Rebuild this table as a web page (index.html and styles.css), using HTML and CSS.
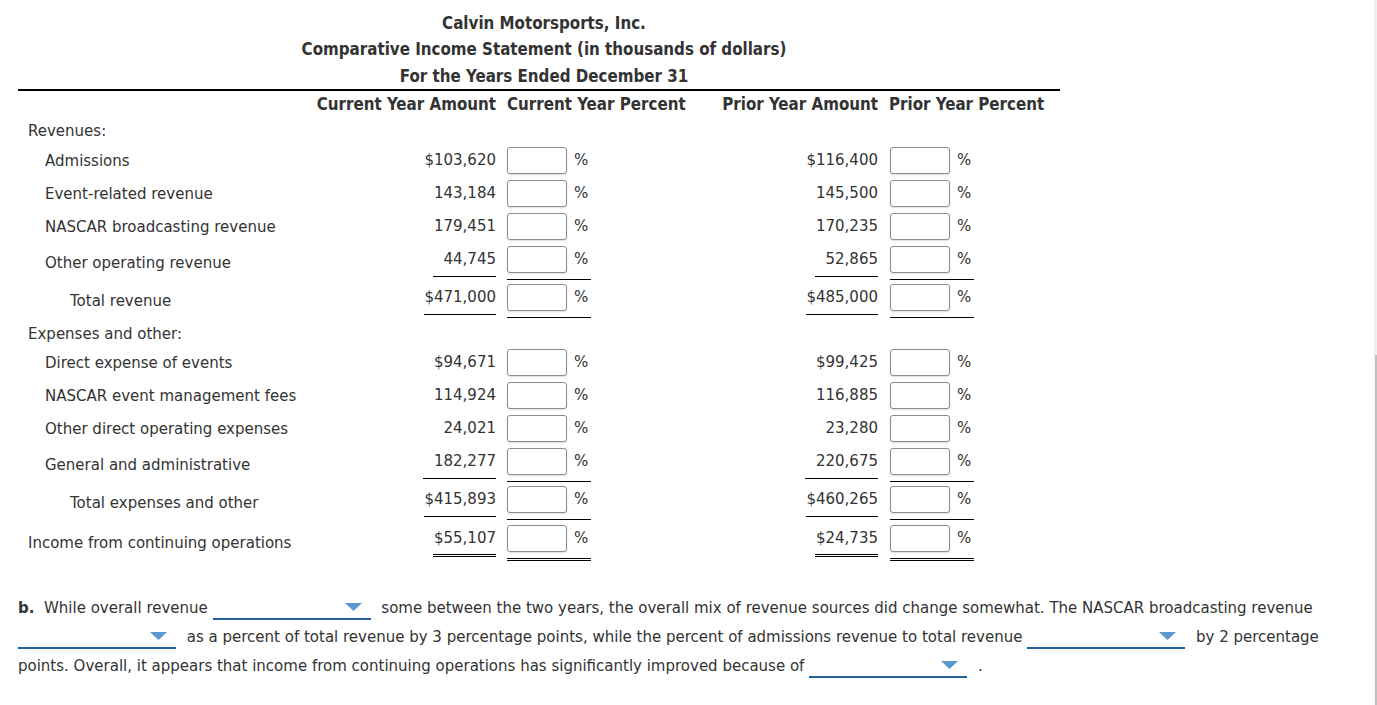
FILE: index.html
```html
<!DOCTYPE html>
<html lang="en">
<head>
<meta charset="utf-8">
<title>Calvin Motorsports, Inc. - Comparative Income Statement</title>
<link rel="stylesheet" href="styles.css">
</head>
<body>
<div class="page">
  <div class="statement">
    <div class="title">
      <div>Calvin Motorsports, Inc.</div>
      <div>Comparative Income Statement (in thousands of dollars)</div>
      <div>For the Years Ended December 31</div>
    </div>

    <div class="row head">
      <div></div>
      <div class="amt">Current Year Amount</div>
      <div class="pct">Current Year Percent</div>
      <div class="amt">Prior Year Amount</div>
      <div class="pct prior">Prior Year Percent</div>
    </div>

    <div class="row section"><div class="label">Revenues:</div></div>

    <div class="row item">
      <div class="label sub">Admissions</div>
      <div class="amt"><span class="num">$103,620</span></div>
      <div class="pct"><span class="pbox"><input class="field" type="text"><span class="sign">%</span></span></div>
      <div class="amt"><span class="num">$116,400</span></div>
      <div class="pct prior"><span class="pbox"><input class="field" type="text"><span class="sign">%</span></span></div>
    </div>
    <div class="row item">
      <div class="label sub">Event-related revenue</div>
      <div class="amt"><span class="num">143,184</span></div>
      <div class="pct"><span class="pbox"><input class="field" type="text"><span class="sign">%</span></span></div>
      <div class="amt"><span class="num">145,500</span></div>
      <div class="pct prior"><span class="pbox"><input class="field" type="text"><span class="sign">%</span></span></div>
    </div>
    <div class="row item">
      <div class="label sub">NASCAR broadcasting revenue</div>
      <div class="amt"><span class="num">179,451</span></div>
      <div class="pct"><span class="pbox"><input class="field" type="text"><span class="sign">%</span></span></div>
      <div class="amt"><span class="num">170,235</span></div>
      <div class="pct prior"><span class="pbox"><input class="field" type="text"><span class="sign">%</span></span></div>
    </div>
    <div class="row item last">
      <div class="label sub">Other operating revenue</div>
      <div class="amt"><span class="num ul">44,745</span></div>
      <div class="pct"><span class="pbox ul"><input class="field" type="text"><span class="sign">%</span></span></div>
      <div class="amt"><span class="num ul">52,865</span></div>
      <div class="pct prior"><span class="pbox ul"><input class="field" type="text"><span class="sign">%</span></span></div>
    </div>
    <div class="row item total">
      <div class="label tot">Total revenue</div>
      <div class="amt"><span class="num ul">$471,000</span></div>
      <div class="pct"><span class="pbox ul"><input class="field" type="text"><span class="sign">%</span></span></div>
      <div class="amt"><span class="num ul">$485,000</span></div>
      <div class="pct prior"><span class="pbox ul"><input class="field" type="text"><span class="sign">%</span></span></div>
    </div>

    <div class="row section exp"><div class="label">Expenses and other:</div></div>

    <div class="row item">
      <div class="label sub">Direct expense of events</div>
      <div class="amt"><span class="num">$94,671</span></div>
      <div class="pct"><span class="pbox"><input class="field" type="text"><span class="sign">%</span></span></div>
      <div class="amt"><span class="num">$99,425</span></div>
      <div class="pct prior"><span class="pbox"><input class="field" type="text"><span class="sign">%</span></span></div>
    </div>
    <div class="row item">
      <div class="label sub">NASCAR event management fees</div>
      <div class="amt"><span class="num">114,924</span></div>
      <div class="pct"><span class="pbox"><input class="field" type="text"><span class="sign">%</span></span></div>
      <div class="amt"><span class="num">116,885</span></div>
      <div class="pct prior"><span class="pbox"><input class="field" type="text"><span class="sign">%</span></span></div>
    </div>
    <div class="row item">
      <div class="label sub">Other direct operating expenses</div>
      <div class="amt"><span class="num">24,021</span></div>
      <div class="pct"><span class="pbox"><input class="field" type="text"><span class="sign">%</span></span></div>
      <div class="amt"><span class="num">23,280</span></div>
      <div class="pct prior"><span class="pbox"><input class="field" type="text"><span class="sign">%</span></span></div>
    </div>
    <div class="row item last">
      <div class="label sub">General and administrative</div>
      <div class="amt"><span class="num ul wide">182,277</span></div>
      <div class="pct"><span class="pbox ul"><input class="field" type="text"><span class="sign">%</span></span></div>
      <div class="amt"><span class="num ul wide">220,675</span></div>
      <div class="pct prior"><span class="pbox ul"><input class="field" type="text"><span class="sign">%</span></span></div>
    </div>
    <div class="row item total">
      <div class="label tot">Total expenses and other</div>
      <div class="amt"><span class="num ul">$415,893</span></div>
      <div class="pct"><span class="pbox ul"><input class="field" type="text"><span class="sign">%</span></span></div>
      <div class="amt"><span class="num ul">$460,265</span></div>
      <div class="pct prior"><span class="pbox ul"><input class="field" type="text"><span class="sign">%</span></span></div>
    </div>

    <div class="row item income">
      <div class="label">Income from continuing operations</div>
      <div class="amt"><span class="num dbl">$55,107</span></div>
      <div class="pct"><span class="pbox dbl"><input class="field" type="text"><span class="sign">%</span></span></div>
      <div class="amt"><span class="num dbl">$24,735</span></div>
      <div class="pct prior"><span class="pbox dbl"><input class="field" type="text"><span class="sign">%</span></span></div>
    </div>
  </div>

  <p class="answer"><b>b.</b>&nbsp; While overall revenue <span class="dropdown"><svg class="caret" width="17" height="8" viewBox="0 0 17 8"><path d="M0 0H17L8.5 8Z"/></svg></span> some between the two years, the overall mix of revenue sources did change somewhat. The NASCAR broadcasting revenue <span class="dropdown"><svg class="caret" width="17" height="8" viewBox="0 0 17 8"><path d="M0 0H17L8.5 8Z"/></svg></span> as a percent of total revenue by 3 percentage points, while the percent of admissions revenue to total revenue <span class="dropdown"><svg class="caret" width="17" height="8" viewBox="0 0 17 8"><path d="M0 0H17L8.5 8Z"/></svg></span> by 2 percentage points. Overall, it appears that income from continuing operations has significantly improved because of <span class="dropdown"><svg class="caret" width="17" height="8" viewBox="0 0 17 8"><path d="M0 0H17L8.5 8Z"/></svg></span> .</p>
</div>
<div class="scrollbar"><div class="thumb"></div></div>
</body>
</html>
```

FILE: styles.css
```css
html, body {
  margin: 0;
  padding: 0;
  background: #fff;
}

body {
  color: #333;
  font-family: "DejaVu Sans", Verdana, sans-serif;
  font-size: 15px;
}

.page {
  padding: 9.5px 0 0 18px;
}

.statement {
  width: 1042px;
}

.title {
  padding-left: 10px;
  text-align: center;
  font-family: "DejaVu Sans Condensed", "DejaVu Sans", sans-serif;
  font-weight: bold;
  font-size: 16.8px;
  line-height: 26.5px;
}

.row {
  display: grid;
  grid-template-columns: 282px 196px 204px 178px 182px;
}

.head {
  border-top: 2px solid #000;
  height: 27px;
  line-height: 27px;
  font-family: "DejaVu Sans Condensed", "DejaVu Sans", sans-serif;
  font-weight: bold;
  font-size: 16.8px;
  white-space: nowrap;
}

.head .amt {
  text-align: right;
}

.head .pct {
  padding-left: 11px;
}

.section {
  height: 26px;
  line-height: 26px;
}

.section.exp {
  height: 27px;
  line-height: 30px;
}

.label {
  padding-left: 10px;
  align-self: center;
  white-space: nowrap;
}

.section .label {
  align-self: start;
}

.label.sub {
  padding-left: 27px;
}

.label.tot {
  padding-left: 52px;
}

.item .amt,
.item .pct {
  padding-top: 3px;
  padding-bottom: 3px;
}

.item.total .amt,
.item.total .pct {
  padding-top: 1px;
  padding-bottom: 1px;
}

.item.income .amt,
.item.income .pct {
  padding-top: 4px;
  padding-bottom: 4px;
}

.item .amt {
  text-align: right;
}

.item .pct {
  padding-left: 11px;
}

.item .pct.prior {
  padding-left: 12px;
}

.num {
  display: inline-block;
  min-width: 63px;
  height: 27px;
  line-height: 27px;
  text-align: right;
  vertical-align: top;
}

.num.wide {
  min-width: 73px;
}

.pbox {
  display: inline-flex;
  align-items: center;
  height: 27px;
  padding-right: 3px;
  vertical-align: top;
}

.num.ul {
  padding-bottom: 3px;
  border-bottom: 1px solid #000;
}

.pbox.ul {
  padding-bottom: 6px;
  border-bottom: 1px solid #000;
}

.num.dbl {
  padding-bottom: 2px;
  border-bottom: 3px double #000;
}

.pbox.dbl {
  padding-bottom: 6px;
  border-bottom: 3px double #000;
}

.field {
  box-sizing: border-box;
  width: 60px;
  height: 27px;
  margin: 0;
  padding: 0 4px;
  border: 1px solid #8d8d8d;
  border-radius: 3px;
  background: #fff;
  box-shadow: 0 1px 2px rgba(0, 0, 0, 0.14);
  font: inherit;
}

.sign {
  margin-left: 7px;
  line-height: 27px;
}

.answer {
  margin: 28.5px 0 0;
  width: 1340px;
  font-family: "DejaVu Sans", Verdana, sans-serif;
  font-size: 15px;
  line-height: 29px;
  color: #333;
}

.dropdown {
  display: inline-flex;
  align-items: center;
  justify-content: flex-end;
  box-sizing: content-box;
  width: 149px;
  height: 21px;
  padding-right: 9px;
  margin-right: 6px;
  border-bottom: 2px solid #23619b;
  vertical-align: middle;
}

.caret {
  display: block;
  fill: #5b97d1;
}

.scrollbar {
  position: fixed;
  top: 0;
  right: 0;
  bottom: 0;
  width: 3px;
  background: #f1f1f1;
}

.thumb {
  position: absolute;
  top: 355px;
  right: 0;
  bottom: 0;
  width: 2px;
  background: #c1c1c1;
}
```
